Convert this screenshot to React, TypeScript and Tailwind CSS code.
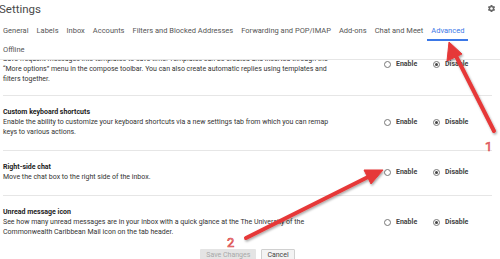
import React from "react";

const tabs = [
  "General",
  "Labels",
  "Inbox",
  "Accounts",
  "Filters and Blocked Addresses",
  "Forwarding and POP/IMAP",
  "Add-ons",
  "Chat and Meet",
];

function Radio({ checked }: { checked: boolean }) {
  return (
    <span className="inline-flex h-[7px] w-[7px] items-center justify-center rounded-full border border-[#777]">
      {checked && <span className="h-[3px] w-[3px] rounded-full bg-[#444]" />}
    </span>
  );
}

function RadioGroup() {
  return (
    <div className="flex items-center text-[7px] font-bold text-[#444]">
      <div className="flex w-[49px] items-center gap-[5px]">
        <Radio checked={false} />
        <span>Enable</span>
      </div>
      <div className="flex items-center gap-[5px]">
        <Radio checked={true} />
        <span>Disable</span>
      </div>
    </div>
  );
}

function Row({
  title,
  lines,
  className,
}: {
  title: string;
  lines: string[];
  className: string;
}) {
  return (
    <div className={"flex items-center " + className}>
      <div className="w-[381px] text-[7px] leading-[10px] text-[#333]">
        <div className="whitespace-nowrap font-bold text-[#222]">{title}</div>
        {lines.map((l) => (
          <div key={l} className="whitespace-nowrap">
            {l}
          </div>
        ))}
      </div>
      <RadioGroup />
    </div>
  );
}

export default function App() {
  return (
    <div
      className="relative h-[259px] w-[500px] overflow-hidden bg-white"
      style={{ fontFamily: "Roboto, 'Liberation Sans', Arial, sans-serif" }}
    >
      {/* header */}
      <div className="flex h-[20px] items-start justify-between pr-[4px]">
        <div className="pt-[1px] text-[11.5px] leading-[16px] text-[#4a4a4a] -ml-[1px]">
          Settings
        </div>
        <svg
          width="9"
          height="9"
          viewBox="0 0 24 24"
          className="mt-[4px]"
          fill="#666"
        >
          <path d="M19.14 12.94c.04-.3.06-.61.06-.94 0-.32-.02-.64-.07-.94l2.030-1.58a.49.49 0 0 0 .12-.61l-1.92-3.32a.488.488 0 0 0-.59-.22l-2.39.96c-.5-.38-1.03-.7-1.62-.94l-.36-2.54a.484.484 0 0 0-.48-.41h-3.84c-.24 0-.43.17-.47.41l-.36 2.54c-.59.24-1.13.57-1.62.94l-2.39-.96c-.22-.08-.47 0-.59.22L2.74 8.87c-.12.21-.08.47.12.61l2.03 1.58c-.05.3-.09.63-.09.94s.02.64.07.94l-2.03 1.58a.49.49 0 0 0-.12.61l1.92 3.32c.12.22.37.29.59.22l2.39-.96c.5.38 1.03.7 1.62.94l.36 2.54c.05.24.24.41.48.41h3.84c.24 0 .44-.17.47-.41l.36-2.54c.59-.24 1.13-.56 1.62-.94l2.39.96c.22.08.47 0 .59-.22l1.920-3.32c.12-.22.07-.47-.12-.61l-2.01-1.58zM12 15.6c-1.98 0-3.6-1.62-3.6-3.6s1.62-3.6 3.6-3.6 3.6 1.62 3.6 3.6-1.62 3.6-3.6 3.6z" />
        </svg>
      </div>

      {/* tabs */}
      <div className="flex h-[21px] items-stretch gap-[8px] pl-[3px] text-[7.5px] text-[#555]">
        {tabs.map((t) => (
          <div key={t} className="flex items-center whitespace-nowrap">
            {t}
          </div>
        ))}
        <div className="relative flex items-center whitespace-nowrap text-[#3b78e7]">
          Advanced
          <span className="absolute -left-[4px] -right-[4px] bottom-0 h-[2px] bg-[#3b78e7]" />
        </div>
      </div>
      <div className="flex h-[19px] items-center border-b border-[#e6e6e6] pl-[3px] text-[7.5px] text-[#555]">
        Offline
      </div>

      {/* content */}
      <div className="overflow-hidden">
        <div className="-mt-[27px] pl-[3px] pr-[8px]">
          <Row
            className="border-b border-[#e6e6e6] pt-[11px] pb-[11px]"
            title="Templates"
            lines={[
              "Save frequent messages into templates to save time. Templates can be created and inserted through the",
              "\u201CMore options\u201D menu in the compose toolbar. You can also create automatic replies using templates and",
              "filters together.",
            ]}
          />
          <Row
            className="border-b border-[#e6e6e6] pt-[11px] pb-[13px]"
            title="Custom keyboard shortcuts"
            lines={[
              "Enable the ability to customize your keyboard shortcuts via a new settings tab from which you can remap",
              "keys to various actions.",
            ]}
          />
          <Row
            className="border-b border-[#e6e6e6] pt-[11px] pb-[13px]"
            title="Right-side chat"
            lines={["Move the chat box to the right side of the inbox."]}
          />
          <Row
            className="pt-[11px]"
            title="Unread message icon"
            lines={[
              "See how many unread messages are in your inbox with a quick glance at the The University of the",
              "Commonwealth Caribbean Mail icon on the tab header.",
            ]}
          />
          <div className="mt-[12px] flex justify-center gap-[5px] text-[7px]">
            <div className="rounded-[1px] bg-[#e4e4e4] px-[6px] py-[2px] leading-[8px] text-[#a8a8a8]">
              Save Changes
            </div>
            <div className="rounded-[1px] border border-[#d0d0d0] bg-[#f3f3f3] px-[5px] py-[1px] leading-[8px] text-[#444]">
              Cancel
            </div>
          </div>
        </div>
      </div>

      {/* annotations */}
      <svg
        className="pointer-events-none absolute left-0 top-0"
        width="500"
        height="259"
        viewBox="0 0 500 259"
      >
        <defs>
          <filter id="sh" x="-20%" y="-20%" width="140%" height="140%">
            <feDropShadow dx="1" dy="1.5" stdDeviation="1.2" floodColor="#000" floodOpacity="0.35" />
          </filter>
        </defs>
        <g filter="url(#sh)" fill="#e63838" stroke="#e63838">
          <line x1="494" y1="131" x2="456" y2="56" strokeWidth="4" strokeLinecap="round" />
          <polygon points="449,42 462,54 447,61" strokeWidth="1" strokeLinejoin="round" />
          <line x1="246" y1="238" x2="368" y2="177" strokeWidth="4" strokeLinecap="round" />
          <polygon points="383,170 371,184 364,170" strokeWidth="1" strokeLinejoin="round" />
        </g>
        <text x="485" y="151" fontSize="13" fill="#f3a0a0" stroke="#d84040" strokeWidth="0.6" fontFamily="Roboto, sans-serif">
          1
        </text>
        <text x="227" y="247" fontSize="13" fill="#f3a0a0" stroke="#d84040" strokeWidth="0.6" fontFamily="Roboto, sans-serif">
          2
        </text>
      </svg>
    </div>
  );
}
